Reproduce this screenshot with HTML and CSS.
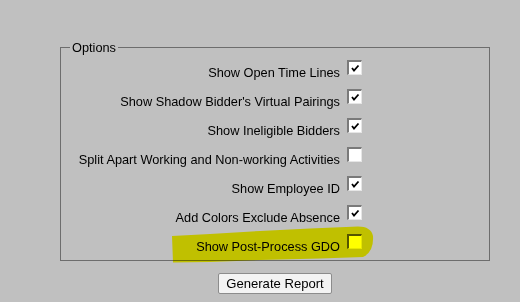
FILE: index.html
```html
<!DOCTYPE html>
<html lang="en">
<head>
  <meta charset="UTF-8" />
  <title>Report Options</title>
  <link rel="stylesheet" href="styles.css">
</head>
<body>

<fieldset class="options">
  <legend>Options</legend>
  <div class="option-list">
    <label class="opt-label">Show Open Time Lines</label>
    <span class="check on"><svg viewBox="0 0 12 12"><polyline points="3,6 5,8.5 9.5,3.5" /></svg></span>

    <label class="opt-label">Show Shadow Bidder's Virtual Pairings</label>
    <span class="check on"><svg viewBox="0 0 12 12"><polyline points="3,6 5,8.5 9.5,3.5" /></svg></span>

    <label class="opt-label">Show Ineligible Bidders</label>
    <span class="check on"><svg viewBox="0 0 12 12"><polyline points="3,6 5,8.5 9.5,3.5" /></svg></span>

    <label class="opt-label">Split Apart Working and Non-working Activities</label>
    <span class="check"></span>

    <label class="opt-label">Show Employee ID</label>
    <span class="check on"><svg viewBox="0 0 12 12"><polyline points="3,6 5,8.5 9.5,3.5" /></svg></span>

    <label class="opt-label">Add Colors Exclude Absence</label>
    <span class="check on"><svg viewBox="0 0 12 12"><polyline points="3,6 5,8.5 9.5,3.5" /></svg></span>

    <label class="opt-label">Show Post-Process GDO</label>
    <span class="check new"></span>
  </div>
</fieldset>

<div class="actions">
  <button type="button">Generate Report</button>
</div>

<!-- marker highlight drawn over the last option -->
<svg class="marker" width="520" height="302" viewBox="0 0 520 302">
  <path d="M172 236 L210 234 L260 231 L310 228.5 L358 226.5 Q371 226.5 373 236 Q374 252 363 257 L320 258.5 L260 260 L210 262 L173 262.5 Z" />
</svg>

</body>
</html>
```

FILE: styles.css
```css
body {
  margin: 0;
  background: #c0c0c0;
  font-family: "Liberation Sans", Arial, sans-serif;
  font-size: 12.75px;
  color: #000;
  position: relative;
  width: 520px;
  height: 302px;
  overflow: hidden;
}

.options {
  box-sizing: border-box;
  width: 430px;
  margin: 40px 0 0 60px;
  padding: 5px 0 11px 0;
  border: 1px solid #6d6d6d;
}

.options legend {
  margin-left: 9px;
  padding: 0 2px;
  line-height: 15px;
}

.option-list {
  display: grid;
  grid-template-columns: 279px 15px;
  grid-auto-rows: 15px;
  column-gap: 7px;
  row-gap: 14px;
}

.opt-label {
  text-align: right;
  line-height: 15px;
  padding-top: 5px;
  white-space: nowrap;
}

.check {
  box-sizing: border-box;
  width: 15px;
  height: 15px;
  background: #fff;
  border-top: 2px solid #7a7a7a;
  border-left: 2px solid #7a7a7a;
  border-right: 1px solid #e6e6e6;
  border-bottom: 1px solid #e6e6e6;
  display: flex;
  align-items: center;
  justify-content: center;
}

.check svg {
  width: 12px;
  height: 12px;
  fill: none;
  stroke: #000;
  stroke-width: 1.8;
}

.check.new {
  background: #ffff00;
  border-top-color: #555;
  border-left-color: #555;
}

.actions {
  width: 430px;
  margin: 12px 0 0 60px;
  text-align: center;
}

.actions button {
  font-family: "Liberation Sans", Arial, sans-serif;
  font-size: 13.1px;
  color: #000;
  height: 21px;
  padding: 0 7px;
  background: #f3f3f3;
  border: 1px solid #8c8c8c;
  border-radius: 2px;
}

.marker {
  position: absolute;
  left: 0;
  top: 0;
  pointer-events: none;
  mix-blend-mode: multiply;
}

.marker path {
  fill: #ffff00;
}
```
